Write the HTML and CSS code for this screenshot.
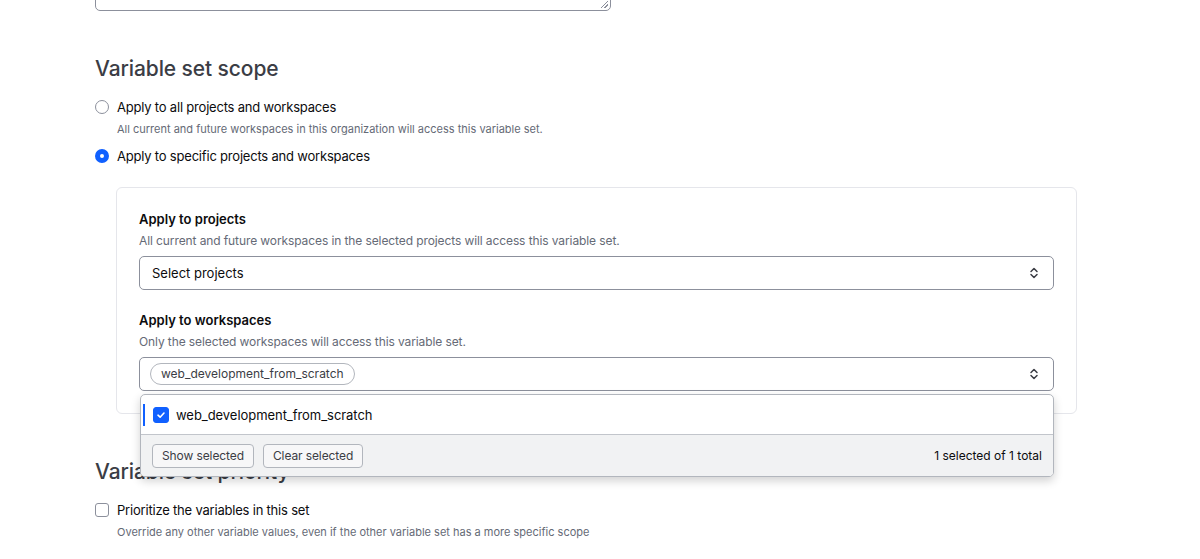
FILE: index.html
```html
<!DOCTYPE html>
<html>
<head>
  <title>Variable set</title>
  <link rel="stylesheet" href="styles.css">
</head>
<body>
  <div class="page">
    <div class="textarea"><span class="grip"></span></div>

    <h2 class="section-title">Variable set scope</h2>

    <div class="choice">
      <span class="radio"></span>
      <span class="choice-label">Apply to all projects and workspaces</span>
    </div>
    <p class="choice-help">All current and future workspaces in this organization will access this variable set.</p>

    <div class="choice">
      <span class="radio checked"></span>
      <span class="choice-label">Apply to specific projects and workspaces</span>
    </div>

    <div class="scope-box">
      <div class="field">
        <div class="field-label">Apply to projects</div>
        <div class="field-help">All current and future workspaces in the selected projects will access this variable set.</div>
        <div class="select">
          <span class="placeholder">Select projects</span>
          <svg class="chevrons" width="10" height="14" viewBox="0 0 10 14"><path d="M2 5.5L5 2.5L8 5.5M2 8.5L5 11.5L8 8.5" fill="none" stroke="#3b3d45" stroke-width="1.5" stroke-linecap="round" stroke-linejoin="round"/></svg>
        </div>
      </div>

      <div class="field">
        <div class="field-label">Apply to workspaces</div>
        <div class="field-help">Only the selected workspaces will access this variable set.</div>
        <div class="select-wrap">
          <div class="select">
            <span class="tag">web_development_from_scratch</span>
            <svg class="chevrons" width="10" height="14" viewBox="0 0 10 14"><path d="M2 5.5L5 2.5L8 5.5M2 8.5L5 11.5L8 8.5" fill="none" stroke="#3b3d45" stroke-width="1.5" stroke-linecap="round" stroke-linejoin="round"/></svg>
          </div>

          <div class="dropdown">
            <div class="option">
              <span class="option-bar"></span>
              <span class="checkbox checked">
                <svg width="10" height="10" viewBox="0 0 10 10"><path d="M2 5.2L4.1 7.2L8 3" fill="none" stroke="#fff" stroke-width="1.6" stroke-linecap="round" stroke-linejoin="round"/></svg>
              </span>
              <span class="option-label">web_development_from_scratch</span>
            </div>
            <div class="dropdown-footer">
              <button class="btn">Show selected</button>
              <button class="btn">Clear selected</button>
              <span class="count">1 selected of 1 total</span>
            </div>
          </div>
        </div>
      </div>
    </div>

    <h2 class="section-title priority">Variable set priority</h2>

    <div class="choice">
      <span class="checkbox"></span>
      <span class="choice-label">Prioritize the variables in this set</span>
    </div>
    <p class="choice-help">Override any other variable values, even if the other variable set has a more specific scope</p>
  </div>
</body>
</html>
```

FILE: styles.css
```css
body {
  margin: 0;
  background: #fff;
  font-family: Inter, "Liberation Sans", sans-serif;
  color: #0c0c0e;
  overflow: hidden;
}

.page {
  width: 982px;
  margin-left: 95px;
}

/* textarea from the section above, scrolled mostly out of view */
.textarea {
  position: relative;
  width: 514px;
  height: 70px;
  margin-top: -61px;
  border: 1px solid #8c909c;
  border-radius: 5px;
}
.grip {
  position: absolute;
  right: 2px;
  bottom: 2px;
  width: 7px;
  height: 7px;
  background: linear-gradient(135deg, transparent 45%, #8c909c 45%, #8c909c 55%, transparent 55%, transparent 70%, #8c909c 70%, #8c909c 80%, transparent 80%);
}

.section-title {
  margin: 44px 0 0;
  font-size: 21px;
  font-weight: 500;
  line-height: 28px;
  color: #3b3d45;
  letter-spacing: -0.1px;
}
.section-title.priority {
  margin-top: 44px;
}

.choice {
  display: flex;
  align-items: center;
  gap: 8px;
  height: 20px;
  margin-top: 14px;
}
.section-title.priority + .choice {
  margin-top: 14px;
}
.choice-label {
  font-size: 13px;
  line-height: 20px;
  letter-spacing: -0.2px;
  color: #0c0c0e;
}
.choice-help {
  margin: 4px 0 0 22px;
  font-size: 11px;
  line-height: 16px;
  color: #656a76;
}
.choice-help + .choice {
  margin-top: 9px;
}

.radio {
  width: 12px;
  height: 12px;
  border: 1px solid #8c909c;
  border-radius: 50%;
  background: #fff;
}
.radio.checked {
  width: 4px;
  height: 4px;
  border: 5px solid #1060ff;
  background: #fff;
}

.checkbox {
  display: inline-flex;
  align-items: center;
  justify-content: center;
  width: 12px;
  height: 12px;
  border: 1px solid #8c909c;
  border-radius: 3px;
  background: #fff;
}
.checkbox.checked {
  border-color: #1060ff;
  background: #1060ff;
}

.scope-box {
  margin: 21px 0 0 21px;
  padding: 22px 22px 22px;
  border: 1px solid #e5e6eb;
  border-radius: 6px;
}

.field + .field {
  margin-top: 21px;
}
.field-label {
  font-size: 13px;
  font-weight: 600;
  line-height: 18px;
}
.field-help {
  margin-top: 5px;
  font-size: 12px;
  line-height: 16px;
  letter-spacing: -0.1px;
  color: #656a76;
}

.select-wrap {
  position: relative;
}
.select {
  display: flex;
  align-items: center;
  height: 32px;
  margin-top: 7px;
  padding: 0 14px 0 12px;
  border: 1px solid #8c909c;
  border-radius: 5px;
  font-size: 13px;
}
.placeholder {
  flex: 1;
}
.select .tag {
  margin-left: -2px;
}
.chevrons {
  margin-left: auto;
}

.tag {
  padding: 2px 10px;
  border: 1px solid #b2b6bd;
  border-radius: 12px;
  font-size: 12px;
  line-height: 16px;
  color: #3b3d45;
}

.dropdown {
  position: absolute;
  top: 37px;
  left: 1px;
  right: 0;
  z-index: 2;
  border: 1px solid #b2b6bd;
  border-radius: 5px;
  background: #fff;
  box-shadow: 0 4px 10px rgba(0, 0, 0, 0.18);
  overflow: hidden;
}
.option {
  display: flex;
  align-items: center;
  gap: 8px;
  height: 39px;
  padding-left: 2px;
  border-bottom: 1px solid #c2c5cb;
}
.option-bar {
  width: 2px;
  height: 22px;
  background: #1060ff;
}
.option .checkbox {
  width: 14px;
  height: 14px;
  border-radius: 3px;
}
.option-label {
  margin-left: -1px;
  font-size: 13px;
  letter-spacing: -0.05px;
}

.dropdown-footer {
  display: flex;
  align-items: center;
  gap: 9px;
  height: 41px;
  padding: 0 11px;
  background: #f1f2f3;
}
.btn {
  height: 24px;
  padding: 0 9px;
  border: 1px solid #b2b6bd;
  border-radius: 4px;
  background: #f7f7f8;
  font-family: inherit;
  font-size: 12px;
  letter-spacing: -0.1px;
  color: #3b3d45;
}
.count {
  margin-left: auto;
  font-size: 12px;
  color: #0c0c0e;
}
```
